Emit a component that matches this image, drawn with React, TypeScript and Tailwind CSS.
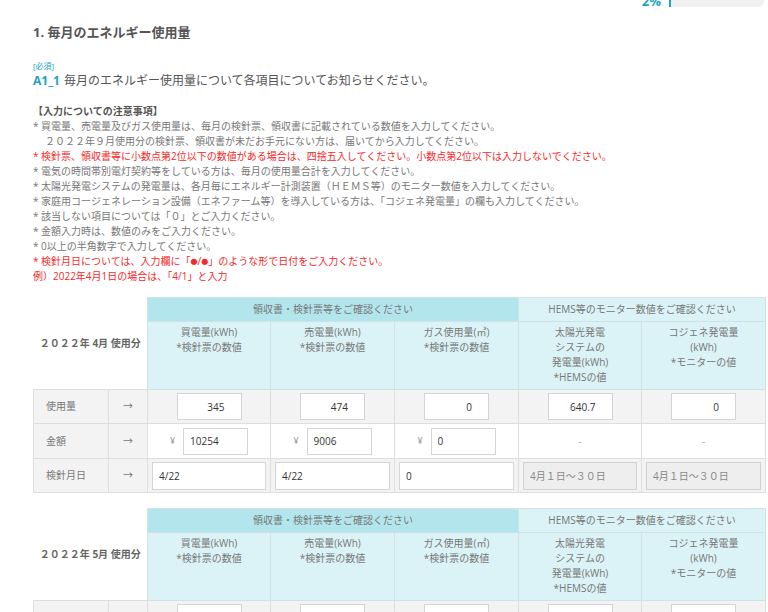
import React from "react";

type Month = {
    label: string;
    buy: string;
    sell: string;
    gas: string;
    solar: string;
    cogen: string;
    buyYen: string;
    sellYen: string;
    gasYen: string;
    buyDate: string;
    sellDate: string;
    gasDate: string;
    range: string;
};

const months: Month[] = [
    { label: "２０２２年 4月 使用分", buy: "345", sell: "474", gas: "0", solar: "640.7", cogen: "0", buyYen: "10254", sellYen: "9006", gasYen: "0", buyDate: "4/22", sellDate: "4/22", gasDate: "0", range: "4月１日～３０日" },
    { label: "２０２２年 5月 使用分", buy: "", sell: "", gas: "", solar: "", cogen: "", buyYen: "", sellYen: "", gasYen: "", buyDate: "", sellDate: "", gasDate: "", range: "5月１日～３１日" },
];

const dot = <span className="text-[7px] align-[1px]">●</span>;

const notes: { key: string; text: React.ReactNode; red?: boolean; indent?: boolean }[] = [
    { key: "n1", text: "* 買電量、売電量及びガス使用量は、毎月の検針票、領収書に記載されている数値を入力してください。" },
    { key: "n2", text: "　２０２２年９月使用分の検針票、領収書が未だお手元にない方は、届いてから入力してください。", indent: true },
    { key: "n3", text: "* 検針票、領収書等に小数点第2位以下の数値がある場合は、四捨五入してください。小数点第2位以下は入力しないでください。", red: true },
    { key: "n4", text: "* 電気の時間帯別電灯契約等をしている方は、毎月の使用量合計を入力してください。" },
    { key: "n5", text: "* 太陽光発電システムの発電量は、各月毎にエネルギー計測装置（ＨＥＭＳ等）のモニター数値を入力してください。" },
    { key: "n6", text: "* 家庭用コージェネレーション設備（エネファーム等）を導入している方は、「コジェネ発電量」の欄も入力してください。" },
    { key: "n7", text: "* 該当しない項目については「０」とご入力ください。" },
    { key: "n8", text: "* 金額入力時は、数値のみをご入力ください。" },
    { key: "n9", text: "* 0以上の半角数字で入力してください。" },
    { key: "n10", text: <>* 検針月日については、入力欄に「{dot}/{dot}」のような形で日付をご入力ください。</>, red: true },
    { key: "n11", text: "例）2022年4月1日の場合は、「4/1」と入力", red: true },
];

const headCols = [
    ["買電量(kWh)", "*検針票の数値"],
    ["売電量(kWh)", "*検針票の数値"],
    ["ガス使用量(㎥)", "*検針票の数値"],
    ["太陽光発電", "システムの", "発電量(kWh)", "*HEMSの値"],
    ["コジェネ発電量", "(kWh)", "*モニターの値"],
];

function NumInput({ value }: { value: string }) {
    return (
        <input
            readOnly
            defaultValue={value}
            className="w-[65px] h-[27px] border border-[#d4d4d4] bg-white text-right pr-4 text-[10px] text-[#333] outline-none"
        />
    );
}

function YenInput({ value }: { value: string }) {
    return (
        <div className="flex items-center justify-center gap-[8px]">
            <span className="text-[9px] text-[#999]">¥</span>
            <input
                readOnly
                defaultValue={value}
                className="w-[65px] h-[27px] border border-[#d4d4d4] bg-white pl-[6px] text-[10px] text-[#333] outline-none"
            />
        </div>
    );
}

function DateInput({ value, disabled }: { value: string; disabled?: boolean }) {
    return (
        <input
            readOnly
            defaultValue={value}
            className={`w-full h-[28px] border pl-[6px] text-[10px] outline-none ${disabled ? "bg-[#eeeeee] border-[#d0d0d0] text-[#888]" : "bg-white border-[#d4d4d4] text-[#333]"}`}
        />
    );
}

function MonthTable({ m }: { m: Month }) {
    const label = "bg-[#f3f3f3] border border-[#dedede] text-[10px] text-[#777]";
    return (
        <table className="table-fixed border-collapse w-[732px] text-[10px]">
            <colgroup>
                <col className="w-[75px]" />
                <col className="w-[39px]" />
                <col className="w-[123px]" />
                <col className="w-[124px]" />
                <col className="w-[124px]" />
                <col className="w-[123px]" />
                <col className="w-[124px]" />
            </colgroup>
            <thead>
                <tr className="h-[24px]">
                    <th rowSpan={2} colSpan={2} className="font-bold text-[10px] text-[#666] text-center align-middle">{m.label}</th>
                    <th colSpan={3} className="bg-[#b3e6ec] border-x border-t border-[#cfe3e6] font-normal text-[#777]">領収書・検針票等をご確認ください</th>
                    <th colSpan={2} className="bg-[#dbf3f6] border-x border-t border-[#cfe3e6] font-normal text-[#777]">HEMS等のモニター数値をご確認ください</th>
                </tr>
                <tr className="h-[68px]">
                    {headCols.map((lines, i) => (
                        <th key={i} className="bg-[#dbf3f6] border border-[#cfe3e6] align-top pt-[3px] font-normal text-[#777] leading-[15px]">
                            {lines.map((l) => (
                                <div key={l}>{l}</div>
                            ))}
                        </th>
                    ))}
                </tr>
            </thead>
            <tbody>
                <tr className="h-[34px] bg-[#f3f3f3]">
                    <td className={`${label} pl-3`}>使用量</td>
                    <td className={`${label} text-center`}>→</td>
                    {[m.buy, m.sell, m.gas, m.solar, m.cogen].map((v, i) => (
                        <td key={i} className="border border-[#dedede] text-center">
                            <NumInput value={v} />
                        </td>
                    ))}
                </tr>
                <tr className="h-[35px] bg-white">
                    <td className={`${label} pl-3`}>金額</td>
                    <td className={`${label} text-center`}>→</td>
                    {[m.buyYen, m.sellYen, m.gasYen].map((v, i) => (
                        <td key={i} className="border border-[#dedede]">
                            <YenInput value={v} />
                        </td>
                    ))}
                    <td className="border border-[#dedede] text-center text-[#aaa]">-</td>
                    <td className="border border-[#dedede] text-center text-[#aaa]">-</td>
                </tr>
                <tr className="h-[34px] bg-[#f3f3f3]">
                    <td className={`${label} pl-3`}>検針月日</td>
                    <td className={`${label} text-center`}>→</td>
                    {[m.buyDate, m.sellDate, m.gasDate].map((v, i) => (
                        <td key={i} className="border border-[#dedede] px-[4px]">
                            <DateInput value={v} />
                        </td>
                    ))}
                    <td className="border border-[#dedede] px-[4px]">
                        <DateInput value={m.range} disabled />
                    </td>
                    <td className="border border-[#dedede] px-[4px]">
                        <DateInput value={m.range} disabled />
                    </td>
                </tr>
            </tbody>
        </table>
    );
}

export default function App() {
    return (
        <div className="w-[768px] h-[612px] overflow-hidden bg-white font-['Open_Sans','Noto_Sans_CJK_JP',sans-serif] text-[#666]">
            {/* progress */}
            <div className="flex items-center justify-end gap-[8px] h-[12px] -mt-[5px] pr-[4px]">
                <span className="text-[13px] font-bold text-[#1ba3c1] leading-none">2%</span>
                <div className="w-[95px] h-[12px] bg-[#f1f1f1] rounded-r-md flex">
                    <div className="w-[2px] h-full bg-[#1ba3c1]" />
                </div>
            </div>

            <div className="pl-[33px]">
                <h1 className="mt-[16px] text-[13px] font-bold text-[#555] leading-[18px]">1. 毎月のエネルギー使用量</h1>

                <div className="mt-[19px] text-[8px] text-[#1ba3c1] leading-[12px]">[必須]</div>
                <div className="text-[12px] text-[#555] leading-[17px]">
                    <span className="text-[#1ba3c1] font-bold mr-[4px]">A1_1</span>
                    毎月のエネルギー使用量について各項目についてお知らせください。
                </div>

                <div className="mt-[15px] text-[10px] leading-[15px]">
                    <div className="font-bold text-[#555]">【入力についての注意事項】</div>
                    {notes.map((n) => (
                        <div key={n.key} className={`${n.red ? "text-[#f52a2a]" : "text-[#777]"} ${n.indent ? "pl-[2px]" : ""}`}>
                            {n.text}
                        </div>
                    ))}
                </div>

                <div className="mt-[13px] flex flex-col gap-[15px]">
                    {months.map((m) => (
                        <MonthTable key={m.label} m={m} />
                    ))}
                </div>
            </div>
        </div>
    );
}
